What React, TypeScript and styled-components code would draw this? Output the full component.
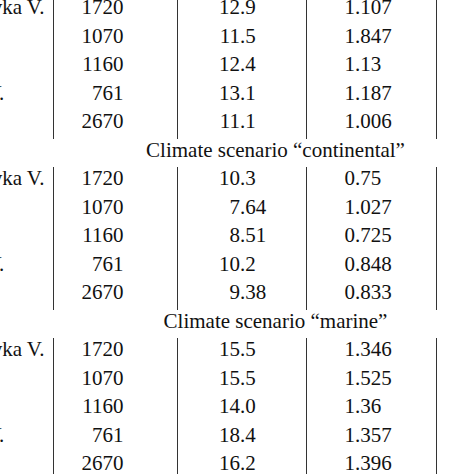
import styled, { createGlobalStyle } from 'styled-components';

const GlobalStyle = createGlobalStyle`
  html, body {
    margin: 0;
    padding: 0;
    background: #ffffff;
    overflow: hidden;
  }
  body {
    width: 474px;
    height: 474px;
  }
`;

// 잘린 표: 왼쪽/위쪽이 화면 밖으로 밀려나 있다
const Sheet = styled.div`
  width: 474px;
  height: 474px;
  overflow: hidden;
`;

const Table = styled.div`
  display: grid;
  grid-template-columns: 220px 124px 129px 130px 282px;
  grid-auto-rows: 28.5px;
  margin: -4px 0 0 -167px;
  width: 885px;
  font-family: "Liberation Serif", "Times New Roman", serif;
  font-size: 21px;
  line-height: 22px;
  color: #111;
`;

interface CellProps {
  ruled?: boolean;
}

const Cell = styled.div<CellProps>`
  box-sizing: border-box;
  border-left: ${p => (p.ruled ? '1.8px solid #333' : 'none')};
  white-space: nowrap;
`;

const NameCell = styled(Cell)`
  padding-left: 24.5px;
  text-align: left;
`;

const RightCell = styled(Cell)`
  text-align: right;
  padding-right: 53.5px;
`;

interface DecProps {
  intWidth: number;
}

// 소수점 정렬 셀
const DecCell = styled(Cell)<DecProps>`
  display: grid;
  grid-template-columns: ${p => p.intWidth}px auto;
`;

const IntPart = styled.span`
  text-align: right;
`;

const FracPart = styled.span`
  text-align: left;
`;

const Heading = styled.div`
  grid-column: 1 / -1;
  text-align: center;
  white-space: nowrap;
`;

type Row = [string, string, string, string];

const blocks: { title?: string; rows: Row[] }[] = [
  {
    rows: [
      ['Novooleksandrivka V.', '1720', '12.9', '1.107'],
      ['Terskol', '1070', '11.5', '1.847'],
      ['Elbrus', '1160', '12.4', '1.13'],
      ['Nizhni Baksan V.', '761', '13.1', '1.187'],
      ['Kazbegi', '2670', '11.1', '1.006'],
    ],
  },
  {
    title: 'Climate scenario “continental”',
    rows: [
      ['Novooleksandrivka V.', '1720', '10.3', '0.75'],
      ['Terskol', '1070', '7.64', '1.027'],
      ['Elbrus', '1160', '8.51', '0.725'],
      ['Nizhni Baksan V.', '761', '10.2', '0.848'],
      ['Kazbegi', '2670', '9.38', '0.833'],
    ],
  },
  {
    title: 'Climate scenario “marine”',
    rows: [
      ['Novooleksandrivka V.', '1720', '15.5', '1.346'],
      ['Terskol', '1070', '15.5', '1.525'],
      ['Elbrus', '1160', '14.0', '1.36'],
      ['Nizhni Baksan V.', '761', '18.4', '1.357'],
      ['Kazbegi', '2670', '16.2', '1.396'],
    ],
  },
];

const Decimal = ({ value, intWidth }: { value: string; intWidth: number }) => {
  const [int, frac] = value.split('.');
  return (
    <DecCell ruled intWidth={intWidth}>
      <IntPart>{int}</IntPart>
      <FracPart>.{frac}</FracPart>
    </DecCell>
  );
};

export default function App() {
  return (
    <>
      <GlobalStyle />
      <Sheet>
        <Table>
          {blocks.map((block, b) => (
            <>
              {block.title && <Heading key={`h${b}`}>{block.title}</Heading>}
              {block.rows.map((r, i) => (
                <>
                  <NameCell key={`n${b}${i}`}>{r[0]}</NameCell>
                  <RightCell ruled key={`a${b}${i}`}>{r[1]}</RightCell>
                  <Decimal key={`t${b}${i}`} value={r[2]} intWidth={62} />
                  <Decimal key={`p${b}${i}`} value={r[3]} intWidth={48} />
                  <Cell ruled key={`e${b}${i}`} />
                </>
              ))}
            </>
          ))}
        </Table>
      </Sheet>
    </>
  );
}
